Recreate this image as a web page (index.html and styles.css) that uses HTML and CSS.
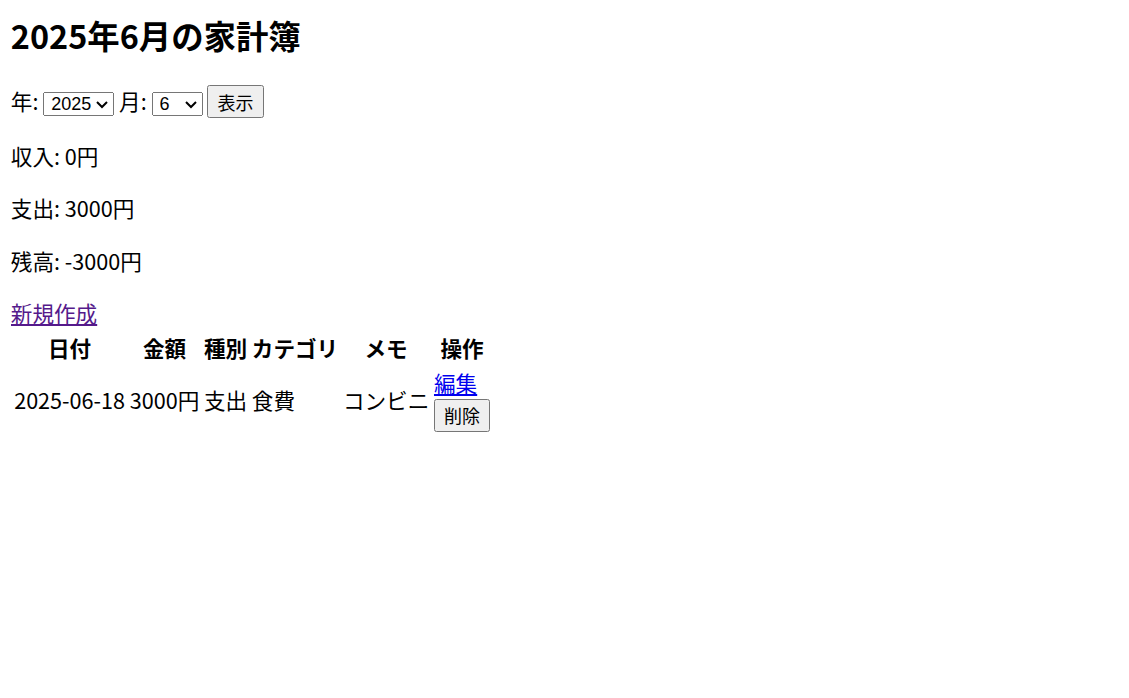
FILE: index.html
```html
<!DOCTYPE html>
<html lang="ja" class="root">
<head>
<meta charset="utf-8">
<title>家計簿</title>
<link rel="stylesheet" href="styles.css">
</head>
<body class="page">
<h1 class="title">2025年6月の家計簿</h1>
<form class="filter">
年: <select name="year" class="sel"><option>2024</option><option selected>2025</option></select>
月: <select name="month" class="sel"><option>5</option><option selected>6</option><option>12</option></select>
<button type="submit" class="btn">表示</button>
</form>
<p class="summary">収入: 0円</p>
<p class="summary">支出: 3000円</p>
<p class="summary">残高: -3000円</p>
<a href="#" class="new-link">新規作成</a>
<table class="records">
<tr><th>日付</th><th>金額</th><th>種別</th><th>カテゴリ</th><th>メモ</th><th>操作</th></tr>
<tr><td>2025-06-18</td><td>3000円</td><td>支出</td><td>食費</td><td>コンビニ</td><td><a href="#edit" class="edit-link">編集</a><form class="del-form"><button type="button" class="btn">削除</button></form></td></tr>
</table>
</body>
</html>
```
FILE: styles.css
```css
.root {
  zoom: 1.35;
}
.page {
  margin: 8px;
  font-family: "Noto Sans CJK JP", sans-serif;
  color: #000;
  background: #fff;
}
.title {
  font-size: 24px;
  margin: 0 0 0.83em;
}
.filter {
  margin: 0 0 16px;
}
.summary {
  margin: 16px 0;
}
.sel {
  font-family: "Liberation Sans", Arial, sans-serif;
  font-size: 13.333px;
  padding-left: 1.5px;
}
.btn {
  font-family: "Noto Sans CJK JP", sans-serif;
  font-size: 13.333px;
}
.new-link {
  color: #551a8b;
}
.edit-link {
  color: #0000ee;
}
.del-form {
  margin: 0;
}
```
